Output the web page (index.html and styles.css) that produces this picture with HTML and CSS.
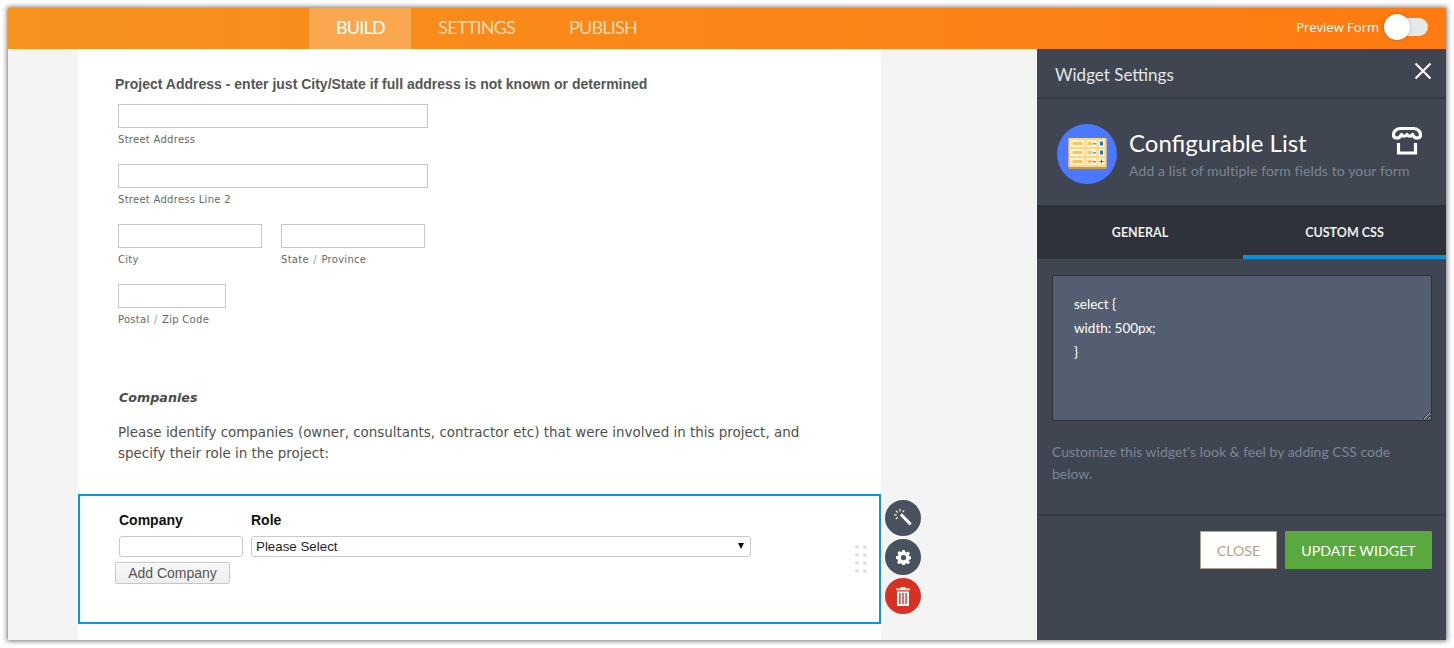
FILE: index.html
```html
<!DOCTYPE html>
<html lang="en">
<head>
<meta charset="utf-8">
<title>Form Builder</title>
<link rel="stylesheet" href="styles.css">
</head>
<body>
<div class="window">
  <header class="topbar">
    <nav class="nav">
      <a class="nav-item active">BUILD</a>
      <a class="nav-item">SETTINGS</a>
      <a class="nav-item">PUBLISH</a>
    </nav>
    <div class="preview">
      <span>Preview Form</span>
      <span class="toggle"><span class="knob"></span></span>
    </div>
  </header>
  <div class="main">
    <div class="canvas">
      <section class="form">
        <div class="form-inner">
          <h3 class="addr-title">Project Address - enter just City/State if full address is not known or determined</h3>
          <div class="field"><input class="box w310" type="text"><label>Street Address</label></div>
          <div class="field"><input class="box w310" type="text"><label>Street Address Line 2</label></div>
          <div class="field-row">
            <div class="field"><input class="box w144" type="text"><label>City</label></div>
            <div class="field"><input class="box w144" type="text"><label>State <span class="sl">/</span> Province</label></div>
          </div>
          <div class="field"><input class="box w108" type="text"><label>Postal <span class="sl">/</span> Zip Code</label></div>
          <h4 class="companies">Companies</h4>
          <p class="intro">Please identify companies (owner, consultants, contractor etc) that were involved in this project, and specify their role in the project:</p>
        </div>
        <div class="selected">
          <div class="list-grid">
            <span class="col-head">Company</span>
            <span class="col-head">Role</span>
            <input class="list-input" type="text">
            <span class="select-wrap"><select class="list-select"><option>Please Select</option></select></span>
          </div>
          <button class="add-btn" type="button">Add Company</button>
          <div class="dots"><i></i><i></i><i></i><i></i><i></i><i></i><i></i><i></i></div>
        </div>
      </section>
      <aside class="tools">
        <button class="tool" type="button" aria-label="Wand">
          <svg width="20" height="20" viewBox="0 0 20 20"><path d="M6.800 7.200 L8.800 5.200 L18 14.400 Q18.800 15.600 18 16.600 Q16.800 17.600 15.600 16.400Z" fill="#fff"/><path d="M7 .8v2.800M1 6.800h2.800M2.800 2.600l2 2M11.200 2.400l-1.600 1.600M2.800 11l1.800-1.800" stroke="#f7e6b8" stroke-width="1.300" fill="none"/></svg>
        </button>
        <button class="tool" type="button" aria-label="Settings">
          <svg width="15" height="15" viewBox="0 0 16 16"><path fill="#fff" fill-rule="evenodd" d="M6.600 0h2.800l.4 2.100 1.300.6 1.800-1.200 2 2-1.200 1.800.6 1.300 2.100.4v2.800l-2.100.4-.6 1.300 1.200 1.800-2 2-1.800-1.200-1.300.6-.4 2.100H6.600l-.4-2.100-1.300-.6-1.800 1.200-2-2 1.200-1.800-.6-1.300L0 9.400V6.600l2.100-.4.6-1.300-1.200-1.800 2-2 1.800 1.200 1.300-.6zM8 5.200a2.800 2.800 0 1 0 0 5.600 2.800 2.800 0 0 0 0-5.600z"/></svg>
        </button>
        <button class="tool danger" type="button" aria-label="Delete">
          <svg width="14" height="19" viewBox="0 0 14 19"><path fill="#fff" d="M4.500 0h5v1.400H14v1.800H0V1.400h4.500zM1 4.400h12V19H1zM3.200 6v11h1.400V6zM6.300 6v11h1.400V6zM9.400 6v11h1.400V6z" fill-rule="evenodd"/></svg>
        </button>
      </aside>
    </div>
    <aside class="panel">
      <div class="panel-head">
        <span>Widget Settings</span>
        <svg class="close-x" width="18" height="18" viewBox="0 0 18 18"><path d="M1.500 1.500l15 15M16.500 1.500l-15 15" stroke="#fff" stroke-width="2" fill="none"/></svg>
      </div>
      <div class="widget-info">
        <span class="widget-icon">
          <svg width="39" height="32" viewBox="0 0 38 32">
            <rect x="0" y="1" width="38" height="30" fill="#c99a4a"/>
            <rect x="0" y="0" width="38" height="29" fill="#fbd77f"/>
            <g fill="#fff4d6">
              <rect x="2" y="2" width="14" height="7"/><rect x="18" y="2" width="10" height="7"/><rect x="30" y="2" width="6" height="7"/>
              <rect x="2" y="11" width="14" height="7"/><rect x="18" y="11" width="10" height="7"/><rect x="30" y="11" width="6" height="7"/>
              <rect x="2" y="20" width="14" height="7"/><rect x="18" y="20" width="10" height="7"/><rect x="30" y="20" width="6" height="7"/>
            </g>
            <g fill="#f5c565">
              <rect x="4" y="4" width="10" height="3"/><rect x="19" y="4" width="5" height="3"/>
              <rect x="4" y="13" width="10" height="3"/><rect x="19" y="13" width="5" height="3"/>
              <rect x="4" y="22" width="10" height="3"/><rect x="19" y="22" width="5" height="3"/>
            </g>
            <g fill="#1f78d0">
              <rect x="31.500" y="3.500" width="3" height="4"/><rect x="31.500" y="12.500" width="3" height="4"/><path d="M32.500 21.500h1v1.500h1.500v1h-1.500v1.500h-1V24H31v-1h1.500z"/>
              <rect x="25" y="5" width="2" height="1.500"/><rect x="25" y="14" width="2" height="1.500"/><rect x="25" y="23" width="2" height="1.500"/>
            </g>
          </svg>
        </span>
        <div class="widget-text">
          <h2>Configurable List</h2>
          <p>Add a list of multiple form fields to your form</p>
        </div>
        <svg class="store" width="30" height="30" viewBox="0 0 30 30"><path d="M8 2.500H22Q28.500 3.500 28.500 9Q28.500 12 25 12Q22 12 20.500 8.500Q18 12 15 8.500Q12 12 9.500 8.500Q8 12 5 12Q1.500 12 1.500 9Q1.500 3.500 8 2.500Z" fill="none" stroke="#fff" stroke-width="3.200" stroke-linejoin="round"/><path d="M6.500 17V27H23.500V17" fill="none" stroke="#fff" stroke-width="3.200"/></svg>
      </div>
      <div class="tabs">
        <div class="tab">GENERAL</div>
        <div class="tab on">CUSTOM CSS</div>
      </div>
      <div class="css-body">
        <textarea class="css-input">select {
width: 500px;
}</textarea>
        <p class="hint">Customize this widget's look &amp; feel by adding CSS code below.</p>
      </div>
      <div class="actions">
        <button class="btn-close" type="button">CLOSE</button>
        <button class="btn-update" type="button">UPDATE WIDGET</button>
      </div>
    </aside>
  </div>
</div>
</body>
</html>
```
FILE: styles.css
```css
* { box-sizing: border-box; }
html, body { margin: 0; height: 100%; background: #fff; overflow: hidden; }
body { padding: 8px 8px 8px 8px; }
.window {
  height: 632px;
  display: flex;
  flex-direction: column;
  overflow: hidden;
  box-shadow: 0 0 5px 1px rgba(0,0,0,.55);
  background: #f4f4f4;
}
.topbar {
  height: 41px;
  flex: none;
  display: flex;
  justify-content: space-between;
  padding-left: 301px;
  padding-right: 18px;
  background: linear-gradient(90deg, #f6921e, #ff7a10);
  color: #fff;
}
.nav { display: flex; }
.nav-item {
  padding: 0 27px;
  font: 18px/39px "Lato", sans-serif;
  color: #fdd9b0;
  letter-spacing: -.8px;
}
.nav-item.active { background: #faa84f; color: #fff; padding: 0 26.500px 0 27px; }
.preview {
  display: flex;
  align-items: center;
  padding-bottom: 3px;
  font: 13px "Open Sans", sans-serif;
  gap: 5px;
}
.toggle {
  display: block;
  position: relative;
  width: 44px;
  height: 18px;
  border-radius: 9px;
  background: #e4eaea;
}
.knob {
  position: absolute;
  left: 0;
  top: -4px;
  width: 26px;
  height: 26px;
  border-radius: 50%;
  background: #fff;
  box-shadow: 0 0 3px rgba(0,0,0,.3);
}
.main { flex: 1; display: flex; min-height: 0; }
.canvas { flex: 1; display: flex; padding-left: 70px; min-width: 0; }
.form { width: 803px; flex: none; background: #fff; }
.form-inner { padding: 27px 37px 0; height: 446px; color: #555; }
.addr-title {
  margin: 0 0 12px;
  font: bold 14px/16px "Liberation Sans", sans-serif;
  color: #555;
}
.field { margin: 0 0 0 3px; height: 60px; }
.field label {
  display: block;
  margin-top: 6px;
  font: 10px/12px "DejaVu Sans", sans-serif;
  letter-spacing: .28px;
  color: #66676b;
}
.sl { margin: 0 1px; color: #999; }
.field-row { display: flex; gap: 16px; }
.box {
  display: block;
  height: 24px;
  padding: 0;
  border: 1px solid #c6c6c6;
  background: #fff;
  border-radius: 0;
}
.w310 { width: 310px; }
.w144 { width: 144px; }
.w108 { width: 108px; }
.companies {
  margin: 45px 0 0 4px;
  font: italic bold 12.700px/18px "DejaVu Sans", sans-serif;
  color: #4a4a4a;
}
.intro {
  margin: 15px 0 0 3px;
  width: 700px;
  font: 13.450px/21px "DejaVu Sans", sans-serif;
  color: #4f4f4f;
}
.selected {
  position: relative;
  height: 130px;
  margin-top: -1px;
  border: 2px solid #0a96e0;
  padding: 15px 0 0 37px;
}
.list-grid {
  display: grid;
  grid-template-columns: 124px 500px;
  column-gap: 8px;
  row-gap: 7px;
  margin-left: 2px;
}
.col-head { font: bold 14px/18px "Liberation Sans", sans-serif; color: #111; }
.list-input, .list-select {
  height: 21px;
  border: 1px solid #c8c8c8;
  border-radius: 3px;
  background: #fff;
  display: block;
  width: 100%;
}
.select-wrap { position: relative; display: block; }
.select-wrap::after {
  content: "";
  position: absolute;
  right: 7px;
  top: 7px;
  border: 3.500px solid transparent;
  border-top: 6px solid #111;
  border-bottom: 0;
}
.list-select {
  appearance: none;
  padding: 0 4px;
  font: 13.333px "Liberation Sans", sans-serif;
  color: #222;
}
.add-btn {
  display: block;
  margin: 5px 0 0 -2px;
  width: 115px;
  height: 22px;
  padding: 0;
  border: 1px solid #c8c8c8;
  border-radius: 2px;
  background: linear-gradient(#f8f8f8, #eee);
  font: 14px "Liberation Sans", sans-serif;
  color: #555;
}
.dots {
  position: absolute;
  top: 49px;
  right: 12px;
  width: 12px;
  display: grid;
  grid-template-columns: 4px 4px;
  justify-content: space-between;
  row-gap: 4px;
}
.dots i { width: 4px; height: 4px; border-radius: 50%; background: #e2e2e2; }
.tools {
  margin-left: 4px;
  padding-top: 451px;
  display: flex;
  flex-direction: column;
  gap: 3px;
}
.tool {
  width: 36px;
  height: 36px;
  padding: 0;
  border: 0;
  border-radius: 50%;
  background: #48525e;
  display: flex;
  align-items: center;
  justify-content: center;
}
.tool.danger { background: #d93024; }
.panel {
  width: 409px;
  flex: none;
  display: flex;
  flex-direction: column;
  background: #3f4551;
  color: #fff;
  font-family: "Lato", sans-serif;
}
.panel-head {
  height: 50px;
  flex: none;
  display: flex;
  align-items: center;
  justify-content: space-between;
  padding: 2px 14px 0 18px;
  font-size: 17px;
  color: #e3e5e8;
  border-bottom: 2px solid #363b45;
}
.close-x { margin-top: -6px; }
.widget-info {
  height: 106px;
  flex: none;
  display: flex;
  align-items: flex-start;
  padding: 25px 0 0 20px;
  position: relative;
}
.widget-icon {
  width: 60px;
  height: 60px;
  flex: none;
  border-radius: 50%;
  background: #4a78ff;
  display: flex;
  align-items: center;
  justify-content: center;
}
.widget-text { margin-left: 12px; }
.widget-text h2 { margin: 4px 0 0; font: 400 24px/30px "Lato", sans-serif; color: #fff; }
.widget-text p { margin: 4px 0 0; font: 14px/18px "Lato", sans-serif; letter-spacing: .11px; color: #7b8594; }
.store { position: absolute; right: 24px; top: 27px; }
.tabs { height: 55px; flex: none; display: flex; background: #2f3339; border-bottom: 1px solid #4a505b; }
.tab {
  width: 206px;
  font: bold 12.500px/56px "Lato", sans-serif;
  text-align: center;
  color: #eceef0;
}
.tab.on { width: 203px; border-bottom: 4px solid #0a8fdc; }
.css-body {
  height: 256px;
  flex: none;
  padding: 15px 14px 0 15px;
  border-bottom: 2px solid #363b45;
}
.css-input {
  display: block;
  width: 380px;
  height: 146px;
  padding: 16px 21px;
  background: #535e70;
  border: 1px solid #2f3339;
  border-radius: 2px;
  color: #fff;
  font: 13.500px/24px "Lato", sans-serif;
  resize: vertical;
  outline: 0;
}
.hint { margin: 20px 0 0; font: 14px/22px "Lato", sans-serif; color: #7b8594; }
.actions { display: flex; justify-content: flex-end; gap: 8px; padding: 15px 14px 0 0; }
.btn-close, .btn-update { height: 38px; padding: 0; font: 14.200px "Lato", sans-serif; }
.btn-close { width: 77px; background: #fff; border: 1px solid #b8a184; color: #b8a184; }
.btn-update { width: 147px; background: #5aa93f; border: 0; color: #fff; border-radius: 1px; }
```
